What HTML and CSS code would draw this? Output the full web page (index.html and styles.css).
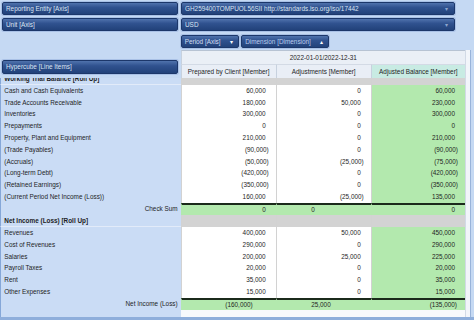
FILE: index.html
```html
<!DOCTYPE html>
<html>
<head>
	<meta charset="utf-8">
	<title>Working Trial Balance</title>
	<link rel="stylesheet" href="styles.css">
</head>
<body>
	<div class="filters">
		<div class="filter">
			<div class="bar name">Reporting Entity [Axis]</div>
			<div class="bar value">GH259400TOMPUOL56SII http://standards.iso.org/iso/17442<span class="drop">&#9662;</span></div>
		</div>
		<div class="filter">
			<div class="bar name">Unit [Axis]</div>
			<div class="bar value">USD<span class="drop">&#9662;</span></div>
		</div>
	</div>

	<div class="head">
		<div class="side">
			<div class="bar hyper">Hypercube [Line Items]</div>
		</div>
		<div class="pane">
			<div class="buttons">
				<div class="bar btn period">Period [Axis]<span>&#9662;</span></div>
				<div class="bar btn dim">Dimension [Dimension]<span>&#9652;</span></div>
			</div>
			<div class="dates">
				<div class="date">2022-01-01/2022-12-31</div>
				<div class="scroll"></div>
			</div>
			<div class="cols">
				<div class="colhead">Prepared by Client [Member]</div>
				<div class="colhead">Adjustments [Member]</div>
				<div class="colhead adj">Adjusted Balance [Member]</div>
				<div class="scroll"></div>
			</div>
		</div>
	</div>

	<div class="rows">
		<div class="row rollup first">
			<div class="label"><span>Working Trial Balance [Roll Up]</span></div>
			<div class="c"></div><div class="c"></div><div class="c"></div><div class="scroll"></div>
		</div>
		<div class="row">
			<div class="label">Cash and Cash Equivalents</div>
			<div class="c">60,000</div><div class="c">0</div><div class="c">60,000</div><div class="scroll"></div>
		</div>
		<div class="row">
			<div class="label">Trade Accounts Receivable</div>
			<div class="c">180,000</div><div class="c">50,000</div><div class="c">230,000</div><div class="scroll"></div>
		</div>
		<div class="row">
			<div class="label">Inventories</div>
			<div class="c">300,000</div><div class="c">0</div><div class="c">300,000</div><div class="scroll"></div>
		</div>
		<div class="row">
			<div class="label">Prepayments</div>
			<div class="c">0</div><div class="c">0</div><div class="c">0</div><div class="scroll"></div>
		</div>
		<div class="row">
			<div class="label">Property, Plant and Equipment</div>
			<div class="c">210,000</div><div class="c">0</div><div class="c">210,000</div><div class="scroll"></div>
		</div>
		<div class="row">
			<div class="label">(Trade Payables)</div>
			<div class="c neg">(90,000)</div><div class="c">0</div><div class="c neg">(90,000)</div><div class="scroll"></div>
		</div>
		<div class="row">
			<div class="label">(Accruals)</div>
			<div class="c neg">(50,000)</div><div class="c neg">(25,000)</div><div class="c neg">(75,000)</div><div class="scroll"></div>
		</div>
		<div class="row">
			<div class="label">(Long-term Debt)</div>
			<div class="c neg">(420,000)</div><div class="c">0</div><div class="c neg">(420,000)</div><div class="scroll"></div>
		</div>
		<div class="row">
			<div class="label">(Retained Earnings)</div>
			<div class="c neg">(350,000)</div><div class="c">0</div><div class="c neg">(350,000)</div><div class="scroll"></div>
		</div>
		<div class="row">
			<div class="label">(Current Period Net Income (Loss))</div>
			<div class="c">160,000</div><div class="c neg">(25,000)</div><div class="c">135,000</div><div class="scroll"></div>
		</div>
		<div class="row total checksum">
			<div class="label">Check Sum</div>
			<div class="c">0</div><div class="c">0</div><div class="c">0</div><div class="scroll"></div>
		</div>
		<div class="row rollup">
			<div class="label">Net Income (Loss) [Roll Up]</div>
			<div class="c"></div><div class="c"></div><div class="c"></div><div class="scroll"></div>
		</div>
		<div class="row">
			<div class="label">Revenues</div>
			<div class="c">400,000</div><div class="c">50,000</div><div class="c">450,000</div><div class="scroll"></div>
		</div>
		<div class="row">
			<div class="label">Cost of Revenues</div>
			<div class="c">290,000</div><div class="c">0</div><div class="c">290,000</div><div class="scroll"></div>
		</div>
		<div class="row">
			<div class="label">Salaries</div>
			<div class="c">200,000</div><div class="c">25,000</div><div class="c">225,000</div><div class="scroll"></div>
		</div>
		<div class="row">
			<div class="label">Payroll Taxes</div>
			<div class="c">20,000</div><div class="c">0</div><div class="c">20,000</div><div class="scroll"></div>
		</div>
		<div class="row">
			<div class="label">Rent</div>
			<div class="c">35,000</div><div class="c">0</div><div class="c">35,000</div><div class="scroll"></div>
		</div>
		<div class="row">
			<div class="label">Other Expenses</div>
			<div class="c">15,000</div><div class="c">0</div><div class="c">15,000</div><div class="scroll"></div>
		</div>
		<div class="row total netincome">
			<div class="label">Net Income (Loss)</div>
			<div class="c neg">(160,000)</div><div class="c">25,000</div><div class="c neg">(135,000)</div><div class="scroll"></div>
		</div>
		<div class="row tail">
			<div class="label"></div>
			<div class="c"></div><div class="c"></div><div class="c"></div><div class="scroll"></div>
		</div>
	</div>
	<div class="footer"></div>
</body>
</html>
```

FILE: styles.css
```css
body {
	margin: 0;
	width: 474px;
	height: 320px;
	overflow: hidden;
	background-color: #c5d9f3;
	font-family: "Liberation Sans", Arial, sans-serif;
	font-size: 6.4px;
	color: #1e1e1e;
}

/* dark axis bars */
.bar {
	box-sizing: border-box;
	display: flex;
	align-items: center;
	padding: 0 3px;
	background: linear-gradient(#5073ad, #30528f 40%, #22427a);
	border: 1px solid #1c376a;
	border-radius: 2px;
	box-shadow: 0 0 0 1px #a9c1e6;
	color: #dbe4f3;
	white-space: nowrap;
}

.filters {
	display: flex;
	flex-direction: column;
	gap: 2.5px;
	padding: 2px 0 0 2px;
}
.filter {
	display: flex;
	gap: 3px;
	height: 13px;
}
.filter .name {
	width: 176px;
}
.filter .value {
	width: 274px;
	justify-content: space-between;
}
.drop {
	color: #8da6cf;
	font-size: 6px;
	padding-right: 3px;
}

.head {
	display: grid;
	grid-template-columns: 180.7px 1fr;
	height: 45px;
	margin-top: 2px;
}
.hyper {
	width: 176px;
	height: 14px;
	margin: 27px 0 0 2px;
}
.pane {
	display: flex;
	flex-direction: column;
}
.buttons {
	display: flex;
	gap: 2.5px;
	height: 13px;
	margin-top: 2px;
}
.btn {
	justify-content: space-between;
	color: #d3def2;
}
.btn span {
	color: #ffffff;
	font-size: 6px;
	padding: 0 2px;
}
.period {
	width: 58px;
}
.dim {
	width: 88px;
	color: #b9cced;
}
.dates {
	display: grid;
	grid-template-columns: 284.3px 6px 1fr;
	height: 14px;
	margin-top: 2px;
}
.date {
	display: flex;
	align-items: center;
	justify-content: center;
	background-color: #eaeff6;
	border-top: 1px solid #b7c3d3;
	border-left: 1px solid #c7d1de;
}
.cols {
	display: grid;
	grid-template-columns: 95px 95px 94.3px 6px 1fr;
	height: 14px;
}
.colhead {
	display: flex;
	align-items: center;
	justify-content: center;
	background-color: #e9eef6;
	border-top: 1px solid #d3dae5;
	border-left: 1px solid #c7d1de;
	white-space: nowrap;
}
.colhead.adj {
	background-color: #c8ebe3;
}

.scroll {
	background-color: #f2f5fa;
	border-left: 1px solid #d2dae6;
	border-right: 1px solid #98b3da;
}

/* grid body */
.row {
	display: grid;
	grid-template-columns: 180.7px 95px 95px 94.3px 6px 1fr;
	height: 11.8px;
	line-height: 11.8px;
}
.label {
	box-sizing: border-box;
	padding-left: 3.3px;
	background-color: #cadcf5;
	border-bottom: 1px solid #e2ebf9;
	border-left: 1px solid #85a7d8;
	white-space: nowrap;
	overflow: hidden;
}
.c {
	box-sizing: border-box;
	text-align: right;
	padding-right: 10px;
	background-color: #ffffff;
	border-bottom: 1px solid #dcdcdc;
	border-left: 1px solid #d2d2d2;
}
.c.neg {
	padding-right: 7px;
}
.c:nth-child(4) {
	background-color: #b3e9ae;
	border-bottom-color: #c7efc3;
}

.rollup .label {
	font-weight: bold;
}
.rollup .c,
.rollup .c:nth-child(4) {
	background-color: #d3d3d3;
	border-bottom-color: #d3d3d3;
}
.row.first {
	height: 7.3px;
}
.first .label span {
	display: block;
	margin-top: -4.5px;
}

.total {
	height: 12.5px;
	line-height: 10px;
}
.total .label {
	text-align: right;
	padding-right: 3px;
	line-height: 12px;
}
.total .c,
.total .c:nth-child(4) {
	background-color: #b3e9ae;
	border-top: 2px solid #1b2a1b;
	border-bottom: 2px solid #1b2a1b;
	border-left-color: #b3e9ae;
}
.checksum .c:nth-child(3) {
	padding-right: 56px;
}
.netincome .c:nth-child(2) {
	padding-right: 23px;
}
.netincome .c:nth-child(3) {
	padding-right: 40px;
}
.netincome .c:nth-child(4) {
	padding-right: 8px;
	border-bottom-color: #203a20;
}

.tail {
	height: 7px;
}
.tail .c,
.tail .c:nth-child(4) {
	background-color: #f7f9fc;
	border-bottom: none;
	border-left-color: #f7f9fc;
}
.tail .label {
	border-bottom: none;
}
.footer {
	height: 5px;
	background-color: #8eaedb;
}
```
